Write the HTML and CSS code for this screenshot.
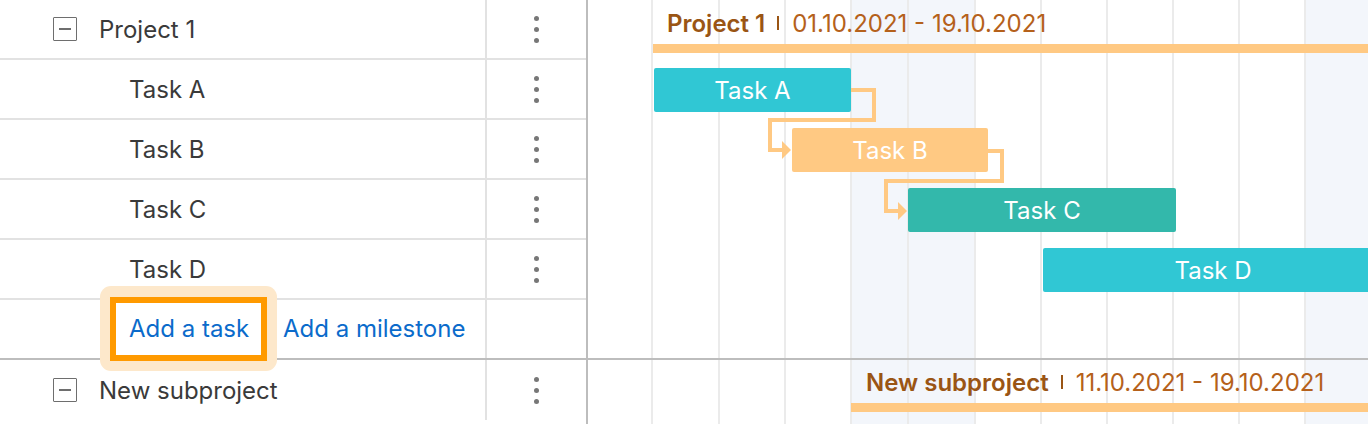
FILE: index.html
```html
<!DOCTYPE html>
<html>
<head>
<meta charset="utf-8">
<link rel="stylesheet" href="styles.css">
</head>
<body>
<div class="app">
  <div class="left">
    <div class="group">
      <div class="row">
        <div class="name project"><span class="toggle"></span><span>Project 1</span></div>
        <div class="menu"><span class="dot"></span><span class="dot"></span><span class="dot"></span></div>
      </div>
      <div class="row">
        <div class="name task">Task A</div>
        <div class="menu"><span class="dot"></span><span class="dot"></span><span class="dot"></span></div>
      </div>
      <div class="row">
        <div class="name task">Task B</div>
        <div class="menu"><span class="dot"></span><span class="dot"></span><span class="dot"></span></div>
      </div>
      <div class="row">
        <div class="name task">Task C</div>
        <div class="menu"><span class="dot"></span><span class="dot"></span><span class="dot"></span></div>
      </div>
      <div class="row">
        <div class="name task">Task D</div>
        <div class="menu"><span class="dot"></span><span class="dot"></span><span class="dot"></span></div>
      </div>
      <div class="row add-row">
        <div class="name adds">
          <a class="link focused" href="#">Add a task</a>
          <a class="link" href="#">Add a milestone</a>
        </div>
        <div class="menu"></div>
      </div>
    </div>
    <div class="group second">
      <div class="row">
        <div class="name project"><span class="toggle"></span><span>New subproject</span></div>
        <div class="menu"><span class="dot"></span><span class="dot"></span><span class="dot"></span></div>
      </div>
    </div>
  </div>

  <div class="gantt">
    <div class="cols">
      <div class="col" style="width:65px"></div>
      <div class="col" style="width:67px"></div>
      <div class="col" style="width:66px"></div>
      <div class="col" style="width:66px"></div>
      <div class="col off" style="width:57px"></div>
      <div class="col off" style="width:67px"></div>
      <div class="col" style="width:66px"></div>
      <div class="col" style="width:66px"></div>
      <div class="col" style="width:66px"></div>
      <div class="col" style="width:66px"></div>
      <div class="col" style="width:66px"></div>
      <div class="col off last"></div>
    </div>

    <div class="lanes">
      <div class="lane summary-lane">
        <div class="summary" style="margin-left:65px">
          <div class="summary-label"><b>Project 1</b><span class="pipe"></span><span>01.10.2021 - 19.10.2021</span></div>
          <div class="stripe"></div>
        </div>
      </div>
      <div class="lane">
        <div class="bar cyan" style="margin-left:66px;width:197px">Task A</div>
      </div>
      <div class="lane">
        <div class="bar peach" style="margin-left:204px;width:196px">Task B</div>
      </div>
      <div class="lane">
        <div class="bar teal" style="margin-left:320px;width:268px">Task C</div>
      </div>
      <div class="lane">
        <div class="bar cyan" style="margin-left:455px;width:340px">Task D</div>
      </div>
      <div class="lane empty"></div>
      <div class="lane summary-lane second">
        <div class="summary" style="margin-left:263px">
          <div class="summary-label"><b>New subproject</b><span class="pipe"></span><span>11.10.2021 - 19.10.2021</span></div>
          <div class="stripe"></div>
        </div>
      </div>
    </div>

    <svg class="links" width="780" height="424" viewBox="0 0 780 424">
      <polyline points="263,90 286,90 286,120 182,120 182,150 196,150" fill="none" stroke="#ffc983" stroke-width="4"/>
      <polygon points="194,141 203,150 194,159" fill="#ffc983"/>
      <polyline points="400,151 414,151 414,181 298,181 298,211 311,211" fill="none" stroke="#ffc983" stroke-width="4"/>
      <polygon points="310,202 319,211 310,220" fill="#ffc983"/>
    </svg>
  </div>
</div>
</body>
</html>
```

FILE: styles.css
```css
* { box-sizing: border-box; }
html, body {
  margin: 0;
  padding: 0;
  background: #ffffff;
  overflow: hidden;
}
body {
  font-family: Inter, "Noto Sans", "Liberation Sans", sans-serif;
  font-size: 24px;
  color: #3a3a3a;
}
.app {
  display: flex;
  width: 1368px;
  height: 424px;
  overflow: hidden;
}
.left {
  width: 588px;
  flex: none;
  border-right: 2px solid #bdbdbd;
  display: flex;
  flex-direction: column;
}
.group.second {
  border-top: 2px solid #bdbdbd;
}
.row {
  display: flex;
  height: 60px;
  border-bottom: 2px solid #e2e2e2;
}
.row.add-row {
  height: 58px;
  border-bottom: none;
}
.group.second .row {
  border-bottom: none;
}
.name {
  width: 487px;
  flex: none;
  border-right: 2px solid #e2e2e2;
  display: flex;
  align-items: center;
}
.name.project {
  padding-left: 53px;
  gap: 22px;
}
.name.task {
  padding-left: 129px;
}
.toggle {
  position: relative;
  width: 24px;
  height: 24px;
  border: 1.5px solid #6e6e6e;
  border-radius: 1px;
  flex: none;
}
.toggle::after {
  content: "";
  position: absolute;
  left: 5px;
  right: 5px;
  top: 10px;
  height: 1.5px;
  background: #6e6e6e;
}
.menu {
  flex: 1;
  display: flex;
  flex-direction: column;
  align-items: center;
  justify-content: center;
  gap: 6px;
}
.dot {
  width: 5px;
  height: 5px;
  border-radius: 50%;
  background: #777777;
}
.name.adds {
  position: relative;
  z-index: 0;
  padding-left: 110px;
  gap: 16px;
}
.link {
  color: #0b6bcb;
  text-decoration: none;
  line-height: 28px;
  white-space: nowrap;
}
.link.focused {
  position: relative;
  display: flex;
  align-items: center;
  flex: none;
  width: 157px;
  height: 64px;
  padding-left: 13px;
  border: 6px solid #ff9a00;
  background: #ffffff;
}
.link.focused::before {
  content: "";
  position: absolute;
  left: -16px;
  right: -16px;
  top: -17px;
  bottom: -16px;
  border-radius: 11px;
  background: #fde8cb;
  z-index: -1;
}

.gantt {
  position: relative;
  flex: 1;
  overflow: hidden;
}
.cols {
  position: absolute;
  inset: 0;
  display: flex;
}
.col {
  flex: none;
  height: 100%;
  border-right: 2px solid #ebebeb;
}
.col.off {
  background: #f3f6fb;
}
.col.last {
  flex: 1;
  border-right: none;
}
.lanes {
  position: relative;
  z-index: 1;
  display: flex;
  flex-direction: column;
}
.lane {
  height: 60px;
  display: flex;
  align-items: center;
}
.lane.empty {
  height: 58px;
}
.lane.second {
  border-top: 2px solid #bdbdbd;
}
.summary-lane {
  align-items: flex-start;
}
.summary {
  flex: 1;
  display: flex;
  flex-direction: column;
}
.summary-label {
  display: flex;
  align-items: center;
  height: 30px;
  margin-top: 8px;
  padding-left: 14px;
  color: #b5611b;
  white-space: nowrap;
}
.lane.second .summary-label {
  margin-top: 7px;
  padding-left: 15px;
}
.summary-label b {
  font-weight: 600;
  color: #9a5514;
}
.pipe {
  width: 2px;
  height: 14px;
  background: #9a5514;
  margin: 0 13px 0 12px;
}
.stripe {
  height: 9px;
  margin-top: 6px;
  background: #ffc983;
}
.bar {
  flex: none;
  height: 44px;
  border-radius: 2px;
  color: #ffffff;
  display: flex;
  align-items: center;
  justify-content: center;
  white-space: nowrap;
}
.bar.cyan { background: #30c7d4; }
.bar.peach { background: #ffc983; }
.bar.teal { background: #33b8ab; }
.links {
  position: absolute;
  left: 0;
  top: 0;
  z-index: 2;
  pointer-events: none;
}
```
